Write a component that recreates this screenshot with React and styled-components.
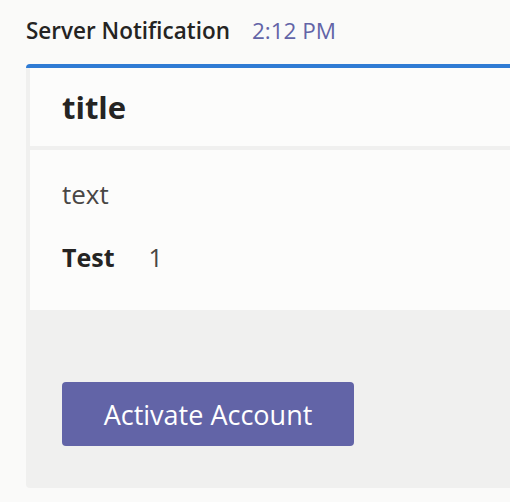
import React from "react";
import styled, {createGlobalStyle} from "styled-components";

const GlobalStyle = createGlobalStyle`
    html, body{
        margin: 0;
        padding: 0;
        background: #fafaf9;
        overflow: hidden;
        font-family: "Open Sans", "Noto Sans", sans-serif;
    }
`;

const App = () => {
    return(
        <>
        <GlobalStyle/>
        <Page>
            <MessageHeader>
                <Sender>Server Notification</Sender>
                <Time>2:12 PM</Time>
            </MessageHeader>
            <Card>
                <Panel height="78px">
                    <Title>title</Title>
                </Panel>
                <Panel height="160px" top="4px">
                    <Body>
                        <BodyText>text</BodyText>
                        <Fact>
                            <FactName>Test</FactName>
                            <FactValue>1</FactValue>
                        </Fact>
                    </Body>
                </Panel>
                <Actions>
                    <ActionButton>Activate Account</ActionButton>
                </Actions>
            </Card>
        </Page>
        </>
    )
}

const Page = styled.div`
    width: 510px;
    height: 502px;
    padding-left: 26px;
    box-sizing: border-box;
    overflow: hidden;
`;

const MessageHeader = styled.div`
    display: flex;
    align-items: baseline;
    gap: 22px;
    height: 64px;
    padding-top: 15px;
    box-sizing: border-box;
    white-space: nowrap;
`;

const Sender = styled.span`
    font-size: 22.5px;
    font-weight: 600;
    color: #252423;
`;

const Time = styled.span`
    font-size: 22.5px;
    color: #6264a7;
`;

const Card = styled.div`
    width: 100%;
    height: 424px;
    background: #f0f0ef;
    border-top: 4px solid #2f7bd4;
    border-radius: 4px 0 0 4px;
    box-sizing: border-box;
    padding-left: 4px;
    display: flex;
    flex-direction: column;
`;

const Panel = styled.div`
    height: ${props => props.height};
    margin-top: ${props => props.top || "0"};
    background: #fcfcfb;
    display: flex;
    align-items: center;
    padding-left: 32px;
`;

const Title = styled.h1`
    margin: 0;
    font-size: 31px;
    font-weight: 700;
    color: #252423;
`;

const Body = styled.div`
    align-self: flex-start;
    padding-top: 26px;
`;

const BodyText = styled.p`
    margin: 0;
    font-size: 26px;
    color: #484644;
`;

const Fact = styled.div`
    display: flex;
    align-items: baseline;
    gap: 34px;
    margin-top: 28px;
`;

const FactName = styled.span`
    font-size: 25px;
    font-weight: 700;
    color: #252423;
`;

const FactValue = styled.span`
    font-size: 25px;
    color: #484644;
`;

const Actions = styled.div`
    flex: 1;
    padding: 72px 0 0 32px;
`;

const ActionButton = styled.button`
    width: 292px;
    height: 64px;
    border: none;
    border-radius: 4px;
    background: #6264a7;
    color: #ffffff;
    font-family: "Open Sans", "Noto Sans", sans-serif;
    font-size: 27px;
    padding: 0;
`;

export default App;
